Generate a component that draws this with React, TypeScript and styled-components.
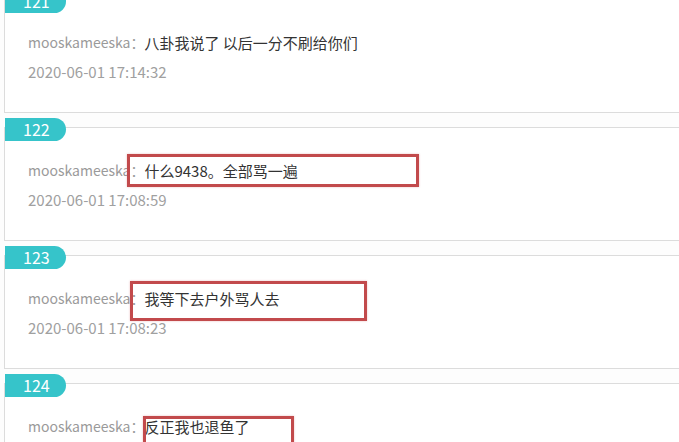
import styled, { createGlobalStyle } from 'styled-components';

const GlobalStyle = createGlobalStyle`
  html, body {
    margin: 0;
    padding: 0;
    background: #fdfdfd;
    overflow: hidden;
  }
  body {
    font-family: "Noto Sans CJK SC", "Noto Sans", sans-serif;
  }
`;

const List = styled.div`
  display: flex;
  flex-direction: column;
  gap: 14px;
  margin-top: -1px;
  padding-left: 4px;
`;

const Card = styled.div`
  position: relative;
  box-sizing: border-box;
  width: 720px;
  height: 114px;
  background: #fff;
  border: 1px solid #dcdcdc;
  border-right: none;
  padding: 27px 0 0 23px;
`;

const Badge = styled.div`
  position: absolute;
  top: -10px;
  left: 0;
  width: 61px;
  height: 23px;
  box-sizing: border-box;
  padding-left: 18px;
  background: #36c4ca;
  border-radius: 0 12px 12px 0;
  color: #fff;
  font-size: 16px;
  line-height: 23px;
`;

const Line = styled.div`
  display: flex;
  align-items: center;
  height: 30px;
  white-space: nowrap;
`;

const Name = styled.span`
  color: #9a9a9a;
  font-size: 14px;
`;

const Message = styled.span`
  color: #333;
  font-size: 15px;
`;

const Time = styled.div`
  height: 30px;
  line-height: 30px;
  font-size: 15px;
  color: #a0a0a0;
`;

const Mark = styled.div<{ $left: number; $top: number; $width: number; $height: number }>`
  position: absolute;
  left: ${(p) => p.$left}px;
  top: ${(p) => p.$top}px;
  width: ${(p) => p.$width}px;
  height: ${(p) => p.$height}px;
  box-sizing: border-box;
  border: 3px solid #c24a4c;
  box-shadow: 0 0 2px rgba(194, 74, 76, 0.35);
  pointer-events: none;
`;

type Comment = {
  no: number;
  text: string;
  time: string;
  mark?: { left: number; top: number; width: number; height: number };
};

const comments: Comment[] = [
  { no: 121, text: '八卦我说了 以后一分不刷给你们', time: '2020-06-01 17:14:32' },
  {
    no: 122,
    text: '什么9438。全部骂一遍',
    time: '2020-06-01 17:08:59',
    mark: { left: 122, top: 26, width: 292, height: 33 },
  },
  {
    no: 123,
    text: '我等下去户外骂人去',
    time: '2020-06-01 17:08:23',
    mark: { left: 125, top: 25, width: 237, height: 40 },
  },
  {
    no: 124,
    text: '反正我也退鱼了',
    time: '2020-06-01 17:07:51',
    mark: { left: 138, top: 32, width: 151, height: 40 },
  },
];

export default function App() {
  return (
    <>
      <GlobalStyle />
      <List>
        {comments.map((c) => (
          <Card key={c.no}>
            <Badge>{c.no}</Badge>
            <Line>
              <Name>mooskameeska：</Name>
              <Message>{c.text}</Message>
            </Line>
            <Time>{c.time}</Time>
            {c.mark && (
              <Mark $left={c.mark.left} $top={c.mark.top} $width={c.mark.width} $height={c.mark.height} />
            )}
          </Card>
        ))}
      </List>
    </>
  );
}
